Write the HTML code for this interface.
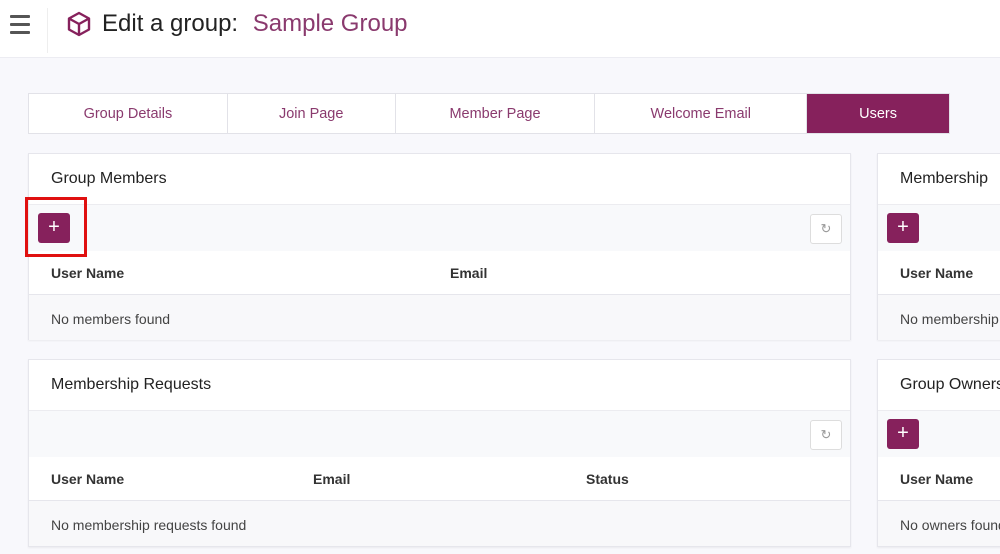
<!DOCTYPE html><html><head><style>
*{box-sizing:border-box;margin:0;padding:0}
body{width:1000px;height:554px;overflow:hidden;background:#f8f8fc;font-family:"Liberation Sans",sans-serif;position:relative}
.hdr{position:absolute;left:0;top:0;width:1000px;height:58px;background:#fff;border-bottom:1px solid #ececf2}
.ham{position:absolute;left:10px;top:15px;width:20px}
.ham i{display:block;height:3px;background:#555;margin-bottom:5px;border-radius:1px}
.vs{position:absolute;left:47px;top:8px;width:1px;height:45px;background:#eee}
.title{position:absolute;left:102px;top:10px;font-size:24px;color:#222}
.title span{color:#8a3a6e;margin-left:8px}
.tabs{position:absolute;left:28px;top:93px;height:41px;width:922px;display:flex;background:#fff;border:1px solid #e2e2e8}
.tabs div{height:100%;display:flex;align-items:center;justify-content:center;font-size:14.5px;color:#8a3a6e;border-right:1px solid #e2e2e8}
.tabs .act{background:#86215c;color:#fff;border:none}
.p{position:absolute;background:#fff;border:1px solid #e6e6ec;box-shadow:0 1px 2px rgba(0,0,0,.06)}
.p .t{height:51px;padding:16px 22px;font-size:16px;color:#222;border-bottom:1px solid #ececf0}
.p .tb{height:46px;background:#f8f9fb;position:relative}
.add{position:absolute;left:9px;top:8px;width:32px;height:30px;background:#86215c;border-radius:3px;color:#fff;font-size:20px;text-align:center;line-height:29px}
.ref{position:absolute;right:8px;top:9px;width:32px;height:30px;border:1px solid #ddd;border-radius:3px;background:#fff;color:#999;font-size:13px;text-align:center;line-height:28px}
.hr{height:44px;position:relative;font-size:14px;font-weight:bold;color:#333;border-bottom:1px solid #e6e6ec}
.hr span{position:absolute;top:14px}
.er{height:45px;background:#f8f8fa;font-size:14px;color:#444;padding:16px 22px}
.red{position:absolute;left:25px;top:197px;width:62px;height:60px;border:3px solid #e01010}
</style></head><body>
<div class="hdr"><div class="ham"><i></i><i></i><i></i></div><div class="vs"></div>
<svg style="position:absolute;left:67px;top:11px" width="24" height="26" viewBox="0 0 24 26" fill="none" stroke="#86215c" stroke-width="2.4" stroke-linejoin="round"><path d="M12 2L22 7.5V18.5L12 24L2 18.5V7.5Z"/><path d="M2 7.5L12 13L22 7.5M12 13V24"/></svg>
<div class="title">Edit a group: <span>Sample Group</span></div></div>
<div class="tabs"><div style="width:199px">Group Details</div><div style="width:168px">Join Page</div><div style="width:200px">Member Page</div><div style="width:212px">Welcome Email</div><div class="act" style="width:142px">Users</div></div>

<div class="p" style="left:28px;top:153px;width:823px;height:187px"><div class="t">Group Members</div><div class="tb"><div class="add">+</div><div class="ref">↻</div></div><div class="hr"><span style="left:22px">User Name</span><span style="left:421px">Email</span></div><div class="er">No members found</div></div>
<div class="p" style="left:28px;top:359px;width:823px;height:188px"><div class="t">Membership Requests</div><div class="tb"><div class="ref">↻</div></div><div class="hr"><span style="left:22px">User Name</span><span style="left:284px">Email</span><span style="left:557px">Status</span></div><div class="er">No membership requests found</div></div>
<div class="p" style="left:877px;top:153px;width:140px;height:187px"><div class="t">Membership</div><div class="tb"><div class="add">+</div></div><div class="hr"><span style="left:22px">User Name</span></div><div class="er" style="white-space:nowrap">No membership</div></div>
<div class="p" style="left:877px;top:359px;width:140px;height:188px"><div class="t" style="white-space:nowrap">Group Owners</div><div class="tb"><div class="add">+</div></div><div class="hr"><span style="left:22px">User Name</span></div><div class="er" style="white-space:nowrap">No owners found</div></div>
<div class="red"></div>
</body></html>
